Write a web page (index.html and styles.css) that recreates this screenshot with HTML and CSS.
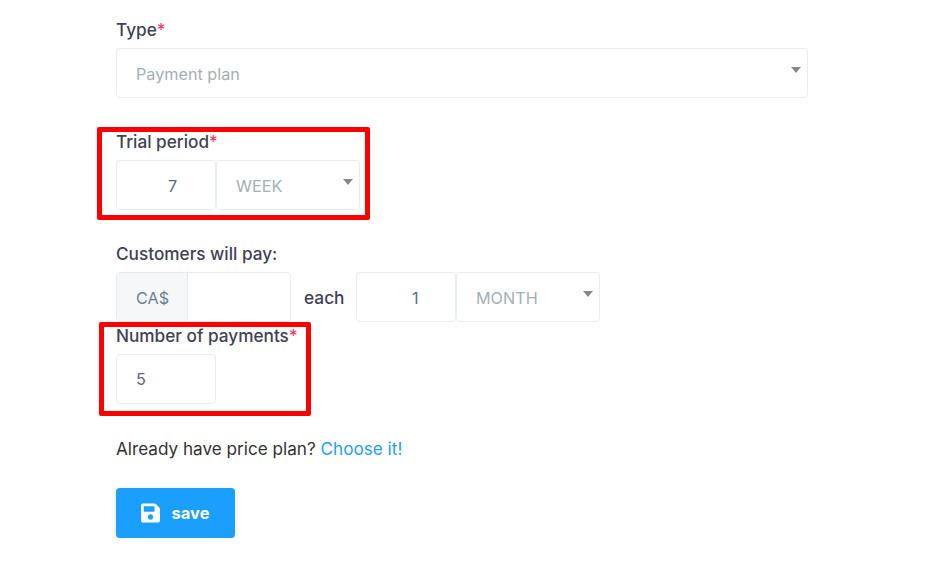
FILE: index.html
```html
<!DOCTYPE html>
<html lang="en">
<head>
    <meta charset="UTF-8">
    <meta name="viewport" content="width=device-width, initial-scale=1.0">
    <title>Payment plan</title>
    <link rel="stylesheet" href="styles.css">
</head>
<body>
    <form class="plan-form">
        <div class="field field-type">
            <label class="field-label">Type<span class="req">*</span></label>
            <div class="box select select-wide">
                <span class="placeholder">Payment plan</span>
                <span class="caret"></span>
            </div>
        </div>

        <div class="field field-trial">
            <label class="field-label">Trial period<span class="req">*</span></label>
            <div class="row">
                <div class="box number number-center">7</div>
                <div class="box select select-unit">
                    <span class="placeholder">WEEK</span>
                    <span class="caret"></span>
                </div>
            </div>
            <div class="highlight highlight-trial"></div>
        </div>

        <div class="field field-pay">
            <label class="field-label">Customers will pay:</label>
            <div class="row">
                <div class="box money">
                    <span class="money-prefix">CA$</span>
                </div>
                <span class="each">each</span>
                <div class="box number number-center number-each">1</div>
                <div class="box select select-unit">
                    <span class="placeholder">MONTH</span>
                    <span class="caret"></span>
                </div>
            </div>
        </div>

        <div class="field field-count">
            <label class="field-label">Number of payments<span class="req">*</span></label>
            <div class="box number">5</div>
            <div class="highlight highlight-count"></div>
        </div>

        <p class="existing">Already have price plan? <a href="#" class="link">Choose it!</a></p>

        <button type="button" class="btn-save">
            <svg class="save-icon" viewBox="0 0 448 512" aria-hidden="true">
                <path fill="currentColor" d="M433.9 129.9l-83.9-83.9A48 48 0 0 0 316.100 32H48C21.500 32 0 53.500 0 80v352c0 26.500 21.500 48 48 48h352c26.500 0 48-21.500 48-48V163.900a48 48 0 0 0-14.100-34zM224 416c-35.300 0-64-28.700-64-64s28.700-64 64-64 64 28.700 64 64-28.700 64-64 64zm96-304.500V212c0 6.600-5.400 12-12 12H76c-6.600 0-12-5.400-12-12V108c0-6.600 5.400-12 12-12h228.500c3.200 0 6.200 1.300 8.500 3.500l3.500 3.500c2.200 2.300 3.500 5.300 3.500 8.500z"/>
            </svg>
            save
        </button>
    </form>
</body>
</html>
```

FILE: styles.css
```css
body {
    margin: 0;
    background: #fff;
    font-family: 'Inter', 'Lato', sans-serif;
    color: #3b3b4f;
}
.plan-form {
    padding: 18px 0 0 116px;
    width: 692px;
}
.field {
    position: relative;
}
.field-trial {
    margin-top: 32px;
}
.field-pay {
    margin-top: 32px;
}
.field-count {
    margin-top: 2px;
}
.field-label {
    display: block;
    height: 24px;
    line-height: 24px;
    margin-bottom: 6px;
    font-size: 17.2px;
    font-weight: 500;
    color: #3f4254;
}
.req {
    color: #f5325c;
    font-weight: 400;
}
.row {
    display: flex;
    align-items: center;
}
.box {
    box-sizing: border-box;
    height: 50px;
    border: 1px solid #e9ecef;
    border-radius: 4px;
    background: #fff;
    font-size: 16.2px;
}
.select {
    position: relative;
    display: flex;
    align-items: center;
    padding: 2px 0 0 19px;
}
.select-wide {
    width: 692px;
}
.select-unit {
    width: 144px;
}
.placeholder {
    color: #a3afb9;
}
.caret {
    position: absolute;
    top: 18px;
    right: 6px;
    border-left: 5px solid transparent;
    border-right: 5px solid transparent;
    border-top: 6px solid #888;
}
.number {
    width: 100px;
    display: flex;
    align-items: center;
    padding-left: 19px;
    color: #5c6b80;
}
.number-center {
    padding: 2px 0 0 51px;
}
.number-each {
    padding-left: 55px;
}
.money {
    width: 175px;
    overflow: hidden;
}
.money-prefix {
    display: flex;
    align-items: center;
    box-sizing: border-box;
    width: 71px;
    height: 48px;
    padding: 2px 0 0 19px;
    background: #f6f7f9;
    border-right: 1px solid #e9ecef;
    color: #6b7f99;
}
.each {
    width: 40px;
    margin: 0 12px 0 13px;
    font-size: 17.3px;
    font-weight: 500;
    color: #3f4254;
}
.existing {
    margin: 33px 0 27px;
    height: 24px;
    line-height: 24px;
    font-size: 17.15px;
    color: #333;
}
.link {
    color: #1a9fff;
    text-decoration: none;
}
.btn-save {
    display: flex;
    align-items: center;
    justify-content: center;
    gap: 12px;
    width: 119px;
    height: 50px;
    padding: 0 1px 0 0;
    border: none;
    border-radius: 4px;
    background: #1a9fff;
    color: #fff;
    font-family: inherit;
    font-size: 16.5px;
    font-weight: 700;
    box-shadow: 0 2px 6px rgba(0, 0, 0, 0.12);
    cursor: pointer;
}
.save-icon {
    width: 19px;
    height: 22px;
}
/* red annotation frames drawn over the form */
.highlight {
    position: absolute;
    box-sizing: border-box;
    border: 5px solid #fe0000;
    border-radius: 2px;
    pointer-events: none;
}
.highlight-trial {
    left: -19px;
    top: -3px;
    width: 273px;
    height: 93px;
}
.highlight-count {
    left: -17px;
    top: -2px;
    width: 212px;
    height: 94px;
}
```
